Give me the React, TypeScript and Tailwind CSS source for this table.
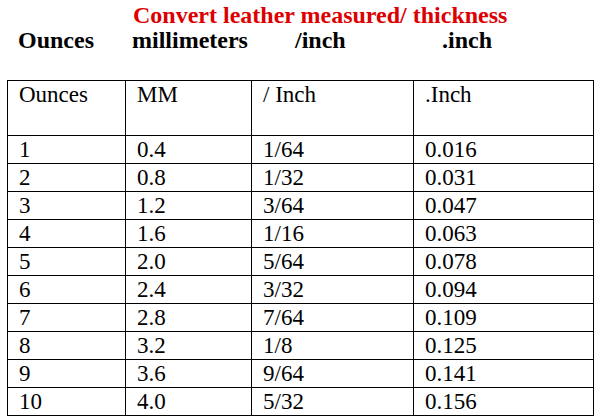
import React from 'react';

const rows: [string, string, string, string][] = [
  ['1', '0.4', '1/64', '0.016'],
  ['2', '0.8', '1/32', '0.031'],
  ['3', '1.2', '3/64', '0.047'],
  ['4', '1.6', '1/16', '0.063'],
  ['5', '2.0', '5/64', '0.078'],
  ['6', '2.4', '3/32', '0.094'],
  ['7', '2.8', '7/64', '0.109'],
  ['8', '3.2', '1/8', '0.125'],
  ['9', '3.6', '9/64', '0.141'],
  ['10', '4.0', '5/32', '0.156'],
];

const serif = "font-['Liberation_Serif','Times_New_Roman',serif]";
const cell = `border border-black p-0 pl-[11px] align-top ${serif}`;

const App: React.FC = () => {
  return (
    <div className={`w-[604px] h-[419px] bg-white text-black overflow-hidden ${serif}`}>
      <div className="pt-[3px] pl-[133px] h-[28px] text-[24px] leading-[25px] font-bold text-[#dd0000] whitespace-nowrap">
        Convert leather measured/ thickness
      </div>
      <div className="flex pl-[18px] h-[25px] text-[24px] leading-[25px] font-bold whitespace-nowrap">
        <span className="w-[114px]">Ounces</span>
        <span className="w-[163px]">millimeters</span>
        <span className="w-[147px]">/inch</span>
        <span>.inch</span>
      </div>
      <table className={`mt-[27px] ml-[7px] w-[587px] border-collapse table-fixed text-[23px] leading-[27px] ${serif}`}>
        <colgroup>
          <col className="w-[118px]" />
          <col className="w-[126px]" />
          <col className="w-[162px]" />
          <col />
        </colgroup>
        <thead>
          <tr className="h-[55px]">
            <td className={`${cell} pl-[10px]`}>Ounces</td>
            <td className={cell}>MM</td>
            <td className={cell}>/ Inch</td>
            <td className={cell}>.Inch</td>
          </tr>
        </thead>
        <tbody>
          {rows.map((r) => (
            <tr key={r[0]} className="h-[28px]">
              {r.map((v, i) => (
                <td key={i} className={cell}>
                  {v}
                </td>
              ))}
            </tr>
          ))}
        </tbody>
      </table>
    </div>
  );
};

export default App;
